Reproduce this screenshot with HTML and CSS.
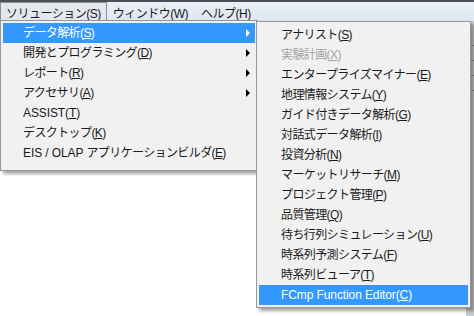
FILE: index.html
```html
<!DOCTYPE html>
<html lang="ja">
<head>
    <meta charset="UTF-8">
    <title>メニュー</title>
    <link rel="stylesheet" href="styles.css">
</head>
<body>
    <div class="window">
        <div class="titlestrip"></div>
        <div class="menubar">
            <div class="menubar-item pressed">ソリューション(S)</div>
            <div class="menubar-item">ウィンドウ(W)</div>
            <div class="menubar-item">ヘルプ(H)</div>
        </div>
        <div class="workspace">
            <div class="blank"></div>
            <div class="side-panel">
                <div class="side-line"></div>
                <div class="side-line"></div>
                <div class="side-line"></div>
                <div class="side-line"></div>
            </div>
        </div>

        <div class="menu menu-main">
            <div class="item active sub">データ解析(<u>S</u>)</div>
            <div class="item sub">開発とプログラミング(<u>D</u>)</div>
            <div class="item sub">レポート(<u>R</u>)</div>
            <div class="item sub">アクセサリ(<u>A</u>)</div>
            <div class="item"><span class="latin">ASSIST(<u>T</u>)</span></div>
            <div class="item">デスクトップ(<u>K</u>)</div>
            <div class="item"><span class="latin">EIS / OLAP </span>アプリケーションビルダ(<u>E</u>)</div>
        </div>

        <div class="menu menu-sub">
            <div class="item">アナリスト(<u>S</u>)</div>
            <div class="item disabled">実験計画(<u>X</u>)</div>
            <div class="item">エンタープライズマイナー(<u>E</u>)</div>
            <div class="item">地理情報システム(<u>Y</u>)</div>
            <div class="item">ガイド付きデータ解析(<u>G</u>)</div>
            <div class="item">対話式データ解析(<u>I</u>)</div>
            <div class="item">投資分析(<u>N</u>)</div>
            <div class="item">マーケットリサーチ(<u>M</u>)</div>
            <div class="item">プロジェクト管理(<u>P</u>)</div>
            <div class="item">品質管理(<u>Q</u>)</div>
            <div class="item">待ち行列シミュレーション(<u>U</u>)</div>
            <div class="item">時系列予測システム(<u>F</u>)</div>
            <div class="item">時系列ビューア(<u>T</u>)</div>
            <div class="item active"><span class="latin">FCmp Function Editor(<u>C</u>)</span></div>
        </div>
    </div>
</body>
</html>
```

FILE: styles.css
```css
body {
    margin: 0;
    font-family: "Liberation Sans", "Noto Sans CJK JP", sans-serif;
    color: #1a1a1a;
}

.window {
    position: relative;
    width: 474px;
    height: 316px;
    overflow: hidden;
    display: flex;
    flex-direction: column;
    background-color: #ffffff;
}

.titlestrip {
    height: 2px;
    background-color: #4b4f55;
}

.menubar {
    height: 19px;
    display: flex;
    align-items: stretch;
    background: linear-gradient(#eaeff7, #dfe7f1);
    font-size: 12px;
}

.menubar-item {
    display: flex;
    align-items: center;
    padding: 0 5px 0 5px;
    margin-right: 1px;
    letter-spacing: -0.5px;
    border: 1px solid transparent;
    border-bottom: none;
}

.menubar-item.pressed {
    background-color: #e4e8ee;
    border-color: #8e8f8f;
    margin-right: 0;
}

.workspace {
    flex: 1;
    display: flex;
}

.blank {
    flex: 1;
}

.side-panel {
    width: 8px;
    background-color: #c9cbcd;
    display: flex;
    flex-direction: column;
    gap: 14px;
    padding-top: 24px;
}

.side-line {
    height: 1px;
    background-color: #8b9096;
}

/* popup menus */
.menu {
    position: absolute;
    background-color: #f1f1f1;
    border: 1px solid #979797;
    padding: 2px;
    box-shadow: 3px 3px 3px rgba(0, 0, 0, 0.35);
    font-size: 12px;
}

.menu-main {
    left: 0;
    top: 20px;
    width: 252px;
    padding-bottom: 7px;
}

.menu-sub {
    left: 256px;
    top: 21px;
    width: 209px;
    padding-top: 3px;
}

.item {
    position: relative;
    height: 20px;
    line-height: 20px;
    padding-left: 20px;
    white-space: nowrap;
    letter-spacing: -0.6px;
}

.menu-sub .item {
    padding-left: 22px;
}

.latin {
    letter-spacing: -0.1px;
}

.item u {
    text-decoration-thickness: 1px;
    text-underline-offset: 1px;
}

.item.active {
    background-color: #3399ff;
    color: #ffffff;
}

.item.disabled {
    color: #a3a3a3;
}

.item.sub::after {
    content: "";
    position: absolute;
    right: 5px;
    top: 6px;
    border-left: 4px solid #000000;
    border-top: 4px solid transparent;
    border-bottom: 4px solid transparent;
}

.item.active.sub::after {
    border-left-color: #ffffff;
}
```
